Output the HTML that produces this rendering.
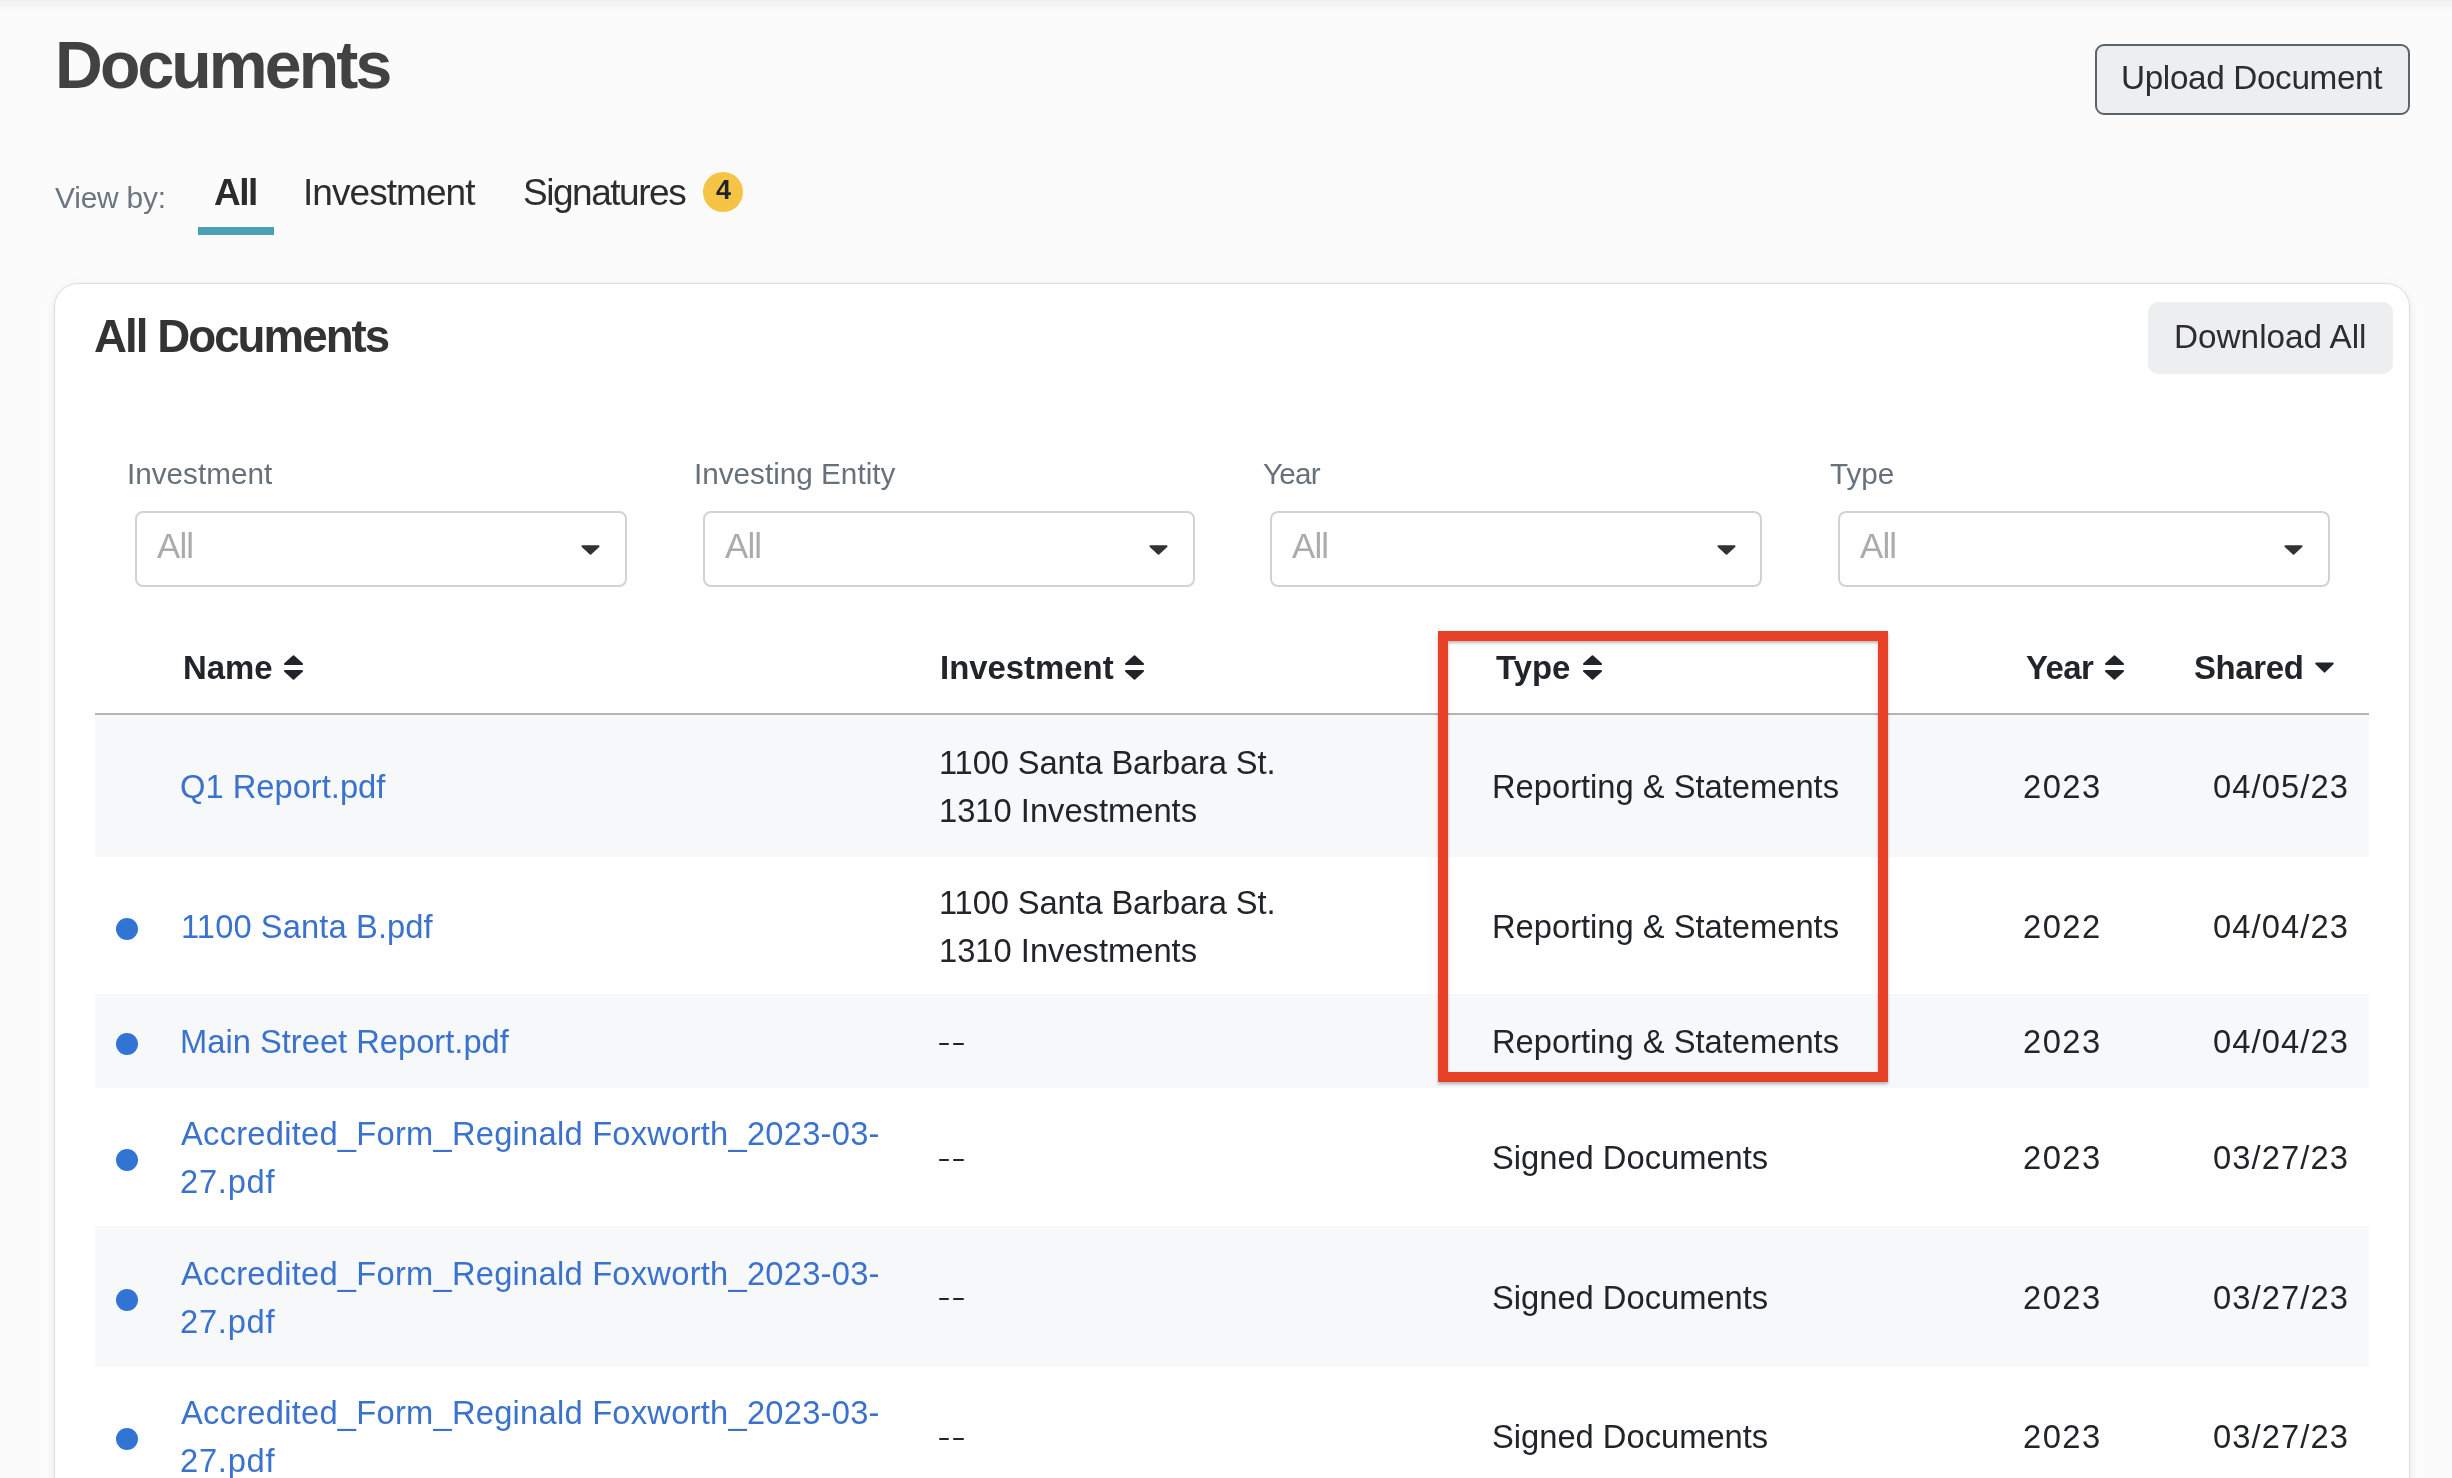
<!DOCTYPE html>
<html>
<head>
<meta charset="utf-8">
<style>
html,body{margin:0;padding:0;}
body{width:2452px;height:1478px;overflow:hidden;background:#fbfbfb;position:relative;font-family:"Liberation Sans",sans-serif;}
.t{position:absolute;white-space:nowrap;line-height:1;will-change:transform;}
.topshade{position:absolute;left:0;top:0;width:2452px;height:11px;background:linear-gradient(#eeeeee,#fbfbfb);}
.btn{position:absolute;box-sizing:border-box;}
.card{position:absolute;left:54px;top:283px;width:2356px;height:1300px;background:#fff;border:1px solid #dcdcdc;border-radius:24px;box-sizing:border-box;box-shadow:0 2px 10px rgba(0,0,0,0.07);}
.sel{position:absolute;top:511px;width:492px;height:76px;box-sizing:border-box;border:2px solid #d2d2d2;border-radius:8px;background:#fff;}
.arr{position:absolute;top:545px;width:19px;height:10px;}
.stripe{position:absolute;left:95px;width:2274px;background:#f7f8fa;}
.dot{position:absolute;left:116px;width:22px;height:22px;border-radius:50%;background:#3274d4;}
.sort{position:absolute;width:19px;height:26px;top:655px;}
</style>
</head>
<body>
<div class="topshade"></div>
<div class="t" style="left:55.00px;top:31.96px;font-size:66.2px;color:#424242;font-weight:700;letter-spacing:-2.9px;">Documents</div>
<div class="btn" style="left:2095px;top:44px;width:315px;height:71px;background:#edeef0;border:2px solid #5b636b;border-radius:9px;"></div>
<div class="t" style="left:2121.00px;top:60.86px;font-size:33.3px;color:#2d2d2d;letter-spacing:-0.36px;">Upload Document</div>
<div class="t" style="left:55.00px;top:182.73px;font-size:29.9px;color:#6c7680;letter-spacing:-0.2px;">View by:</div>
<div class="t" style="left:214.00px;top:174.04px;font-size:37px;color:#2b2b2b;font-weight:700;letter-spacing:-1.5px;">All</div>
<div style="position:absolute;left:198px;top:227px;width:76px;height:8px;background:#4aa0b5;"></div>
<div class="t" style="left:303.00px;top:174.04px;font-size:37px;color:#2d2d2d;letter-spacing:-0.95px;">Investment</div>
<div class="t" style="left:523.00px;top:174.04px;font-size:37px;color:#2d2d2d;letter-spacing:-1.47px;">Signatures</div>
<div style="position:absolute;left:703px;top:172px;width:40px;height:40px;border-radius:50%;background:#f6c445;"></div>
<div class="t" style="left:715.60px;top:177.28px;font-size:27px;color:#1f2329;font-weight:700;">4</div>
<div class="card"></div>
<div class="t" style="left:94.30px;top:314.28px;font-size:45.7px;color:#333;font-weight:700;letter-spacing:-1.97px;">All Documents</div>
<div class="btn" style="left:2148px;top:302px;width:245px;height:72px;background:#edeef0;border-radius:10px;"></div>
<div class="t" style="left:2174.00px;top:319.86px;font-size:33.3px;color:#2d2d2d;">Download All</div>
<div class="t" style="left:126.50px;top:458.90px;font-size:29.7px;color:#67717b;">Investment</div>
<div class="sel" style="left:135px;"></div>
<div class="t" style="left:157.20px;top:528.79px;font-size:34.8px;color:#ababab;letter-spacing:-0.8px;">All</div>
<svg class="arr" style="left:581px" viewBox="0 0 19 10"><path d="M1.5 1.2 H17.5 L9.5 8.8 Z" fill="#333" stroke="#333" stroke-width="2" stroke-linejoin="round"/></svg>
<div class="t" style="left:693.50px;top:458.90px;font-size:29.7px;color:#67717b;">Investing Entity</div>
<div class="sel" style="left:703px;"></div>
<div class="t" style="left:725.20px;top:528.79px;font-size:34.8px;color:#ababab;letter-spacing:-0.8px;">All</div>
<svg class="arr" style="left:1149px" viewBox="0 0 19 10"><path d="M1.5 1.2 H17.5 L9.5 8.8 Z" fill="#333" stroke="#333" stroke-width="2" stroke-linejoin="round"/></svg>
<div class="t" style="left:1262.50px;top:458.90px;font-size:29.7px;color:#67717b;letter-spacing:-0.75px;">Year</div>
<div class="sel" style="left:1270px;"></div>
<div class="t" style="left:1292.20px;top:528.79px;font-size:34.8px;color:#ababab;letter-spacing:-0.8px;">All</div>
<svg class="arr" style="left:1717px" viewBox="0 0 19 10"><path d="M1.5 1.2 H17.5 L9.5 8.8 Z" fill="#333" stroke="#333" stroke-width="2" stroke-linejoin="round"/></svg>
<div class="t" style="left:1830.00px;top:458.90px;font-size:29.7px;color:#67717b;">Type</div>
<div class="sel" style="left:1838px;"></div>
<div class="t" style="left:1860.20px;top:528.79px;font-size:34.8px;color:#ababab;letter-spacing:-0.8px;">All</div>
<svg class="arr" style="left:2284px" viewBox="0 0 19 10"><path d="M1.5 1.2 H17.5 L9.5 8.8 Z" fill="#333" stroke="#333" stroke-width="2" stroke-linejoin="round"/></svg>
<div class="t" style="left:183.00px;top:651.70px;font-size:32.9px;color:#212529;font-weight:700;">Name</div>
<svg class="sort" style="left:284px" viewBox="0 0 19 26"><path d="M9.5 1.2 L18 9 H1 Z M1 16 H18 L9.5 23.8 Z" fill="#212529" stroke="#212529" stroke-width="2" stroke-linejoin="round"/></svg>
<div class="t" style="left:940.00px;top:651.70px;font-size:32.9px;color:#212529;font-weight:700;">Investment</div>
<svg class="sort" style="left:1125px" viewBox="0 0 19 26"><path d="M9.5 1.2 L18 9 H1 Z M1 16 H18 L9.5 23.8 Z" fill="#212529" stroke="#212529" stroke-width="2" stroke-linejoin="round"/></svg>
<div class="t" style="left:1496.00px;top:651.70px;font-size:32.9px;color:#212529;font-weight:700;">Type</div>
<svg class="sort" style="left:1583px" viewBox="0 0 19 26"><path d="M9.5 1.2 L18 9 H1 Z M1 16 H18 L9.5 23.8 Z" fill="#212529" stroke="#212529" stroke-width="2" stroke-linejoin="round"/></svg>
<div class="t" style="left:2026.00px;top:651.70px;font-size:32.9px;color:#212529;font-weight:700;letter-spacing:-0.6px;">Year</div>
<svg class="sort" style="left:2105px" viewBox="0 0 19 26"><path d="M9.5 1.2 L18 9 H1 Z M1 16 H18 L9.5 23.8 Z" fill="#212529" stroke="#212529" stroke-width="2" stroke-linejoin="round"/></svg>
<div class="t" style="left:2194.00px;top:651.70px;font-size:32.9px;color:#212529;font-weight:700;letter-spacing:-0.35px;">Shared</div>
<svg style="position:absolute;left:2315px;top:662px;width:19px;height:11px" viewBox="0 0 19 11"><path d="M1.3 1.5 H17.7 L9.5 9.6 Z" fill="#212529" stroke="#212529" stroke-width="2" stroke-linejoin="round"/></svg>
<div style="position:absolute;left:95px;top:713px;width:2274px;height:2px;background:#b5b5b5;"></div>
<div class="stripe" style="top:715px;height:142px;"></div>
<div class="stripe" style="top:994px;height:94px;"></div>
<div class="stripe" style="top:1226px;height:141px;"></div>
<div class="t" style="left:179.50px;top:771.37px;font-size:32.7px;color:#3b72cd;">Q1 Report.pdf</div>
<div class="t" style="left:939.00px;top:747.37px;font-size:32.7px;color:#212529;letter-spacing:-0.13px;">1100 Santa Barbara St.</div>
<div class="t" style="left:939.00px;top:795.37px;font-size:32.7px;color:#212529;">1310 Investments</div>
<div class="t" style="left:1491.60px;top:771.37px;font-size:32.7px;color:#212529;">Reporting &amp; Statements</div>
<div class="t" style="left:2023.00px;top:771.37px;font-size:32.7px;color:#212529;letter-spacing:1.5px;">2023</div>
<div class="t" style="left:2213.00px;top:771.37px;font-size:32.7px;color:#212529;letter-spacing:1.1px;">04/05/23</div>
<div class="dot" style="top:917.5px;"></div>
<div class="t" style="left:181.40px;top:910.87px;font-size:32.7px;color:#3b72cd;letter-spacing:0.1px;">1100 Santa B.pdf</div>
<div class="t" style="left:939.00px;top:886.87px;font-size:32.7px;color:#212529;letter-spacing:-0.13px;">1100 Santa Barbara St.</div>
<div class="t" style="left:939.00px;top:934.87px;font-size:32.7px;color:#212529;">1310 Investments</div>
<div class="t" style="left:1491.60px;top:910.87px;font-size:32.7px;color:#212529;">Reporting &amp; Statements</div>
<div class="t" style="left:2023.00px;top:910.87px;font-size:32.7px;color:#212529;letter-spacing:1.5px;">2022</div>
<div class="t" style="left:2213.00px;top:910.87px;font-size:32.7px;color:#212529;letter-spacing:1.1px;">04/04/23</div>
<div class="dot" style="top:1033.0px;"></div>
<div class="t" style="left:179.50px;top:1026.37px;font-size:32.7px;color:#3b72cd;">Main Street Report.pdf</div>
<div style="position:absolute;left:938.6px;top:1043px;width:10.5px;height:2.4px;background:#212529;border-radius:1px;"></div>
<div style="position:absolute;left:953px;top:1043px;width:10.5px;height:2.4px;background:#212529;border-radius:1px;"></div>
<div class="t" style="left:1491.60px;top:1026.37px;font-size:32.7px;color:#212529;">Reporting &amp; Statements</div>
<div class="t" style="left:2023.00px;top:1026.37px;font-size:32.7px;color:#212529;letter-spacing:1.5px;">2023</div>
<div class="t" style="left:2213.00px;top:1026.37px;font-size:32.7px;color:#212529;letter-spacing:1.1px;">04/04/23</div>
<div class="dot" style="top:1149.0px;"></div>
<div class="t" style="left:180.80px;top:1118.37px;font-size:32.7px;color:#3b72cd;letter-spacing:0.24px;">Accredited_Form_Reginald Foxworth_2023-03-</div>
<div class="t" style="left:179.50px;top:1166.37px;font-size:32.7px;color:#3b72cd;letter-spacing:0.75px;">27.pdf</div>
<div style="position:absolute;left:938.6px;top:1159px;width:10.5px;height:2.4px;background:#212529;border-radius:1px;"></div>
<div style="position:absolute;left:953px;top:1159px;width:10.5px;height:2.4px;background:#212529;border-radius:1px;"></div>
<div class="t" style="left:1491.60px;top:1142.37px;font-size:32.7px;color:#212529;">Signed Documents</div>
<div class="t" style="left:2023.00px;top:1142.37px;font-size:32.7px;color:#212529;letter-spacing:1.5px;">2023</div>
<div class="t" style="left:2213.00px;top:1142.37px;font-size:32.7px;color:#212529;letter-spacing:1.1px;">03/27/23</div>
<div class="dot" style="top:1288.5px;"></div>
<div class="t" style="left:180.80px;top:1257.87px;font-size:32.7px;color:#3b72cd;letter-spacing:0.24px;">Accredited_Form_Reginald Foxworth_2023-03-</div>
<div class="t" style="left:179.50px;top:1305.87px;font-size:32.7px;color:#3b72cd;letter-spacing:0.75px;">27.pdf</div>
<div style="position:absolute;left:938.6px;top:1298px;width:10.5px;height:2.4px;background:#212529;border-radius:1px;"></div>
<div style="position:absolute;left:953px;top:1298px;width:10.5px;height:2.4px;background:#212529;border-radius:1px;"></div>
<div class="t" style="left:1491.60px;top:1281.87px;font-size:32.7px;color:#212529;">Signed Documents</div>
<div class="t" style="left:2023.00px;top:1281.87px;font-size:32.7px;color:#212529;letter-spacing:1.5px;">2023</div>
<div class="t" style="left:2213.00px;top:1281.87px;font-size:32.7px;color:#212529;letter-spacing:1.1px;">03/27/23</div>
<div class="dot" style="top:1428.0px;"></div>
<div class="t" style="left:180.80px;top:1397.37px;font-size:32.7px;color:#3b72cd;letter-spacing:0.24px;">Accredited_Form_Reginald Foxworth_2023-03-</div>
<div class="t" style="left:179.50px;top:1445.37px;font-size:32.7px;color:#3b72cd;letter-spacing:0.75px;">27.pdf</div>
<div style="position:absolute;left:938.6px;top:1438px;width:10.5px;height:2.4px;background:#212529;border-radius:1px;"></div>
<div style="position:absolute;left:953px;top:1438px;width:10.5px;height:2.4px;background:#212529;border-radius:1px;"></div>
<div class="t" style="left:1491.60px;top:1421.37px;font-size:32.7px;color:#212529;">Signed Documents</div>
<div class="t" style="left:2023.00px;top:1421.37px;font-size:32.7px;color:#212529;letter-spacing:1.5px;">2023</div>
<div class="t" style="left:2213.00px;top:1421.37px;font-size:32.7px;color:#212529;letter-spacing:1.1px;">03/27/23</div>
<div style="position:absolute;left:1438px;top:631px;width:450px;height:451px;box-sizing:border-box;border:10px solid #e84127;filter:drop-shadow(0 2px 1.5px rgba(0,0,0,0.28));"></div>
</body>
</html>
